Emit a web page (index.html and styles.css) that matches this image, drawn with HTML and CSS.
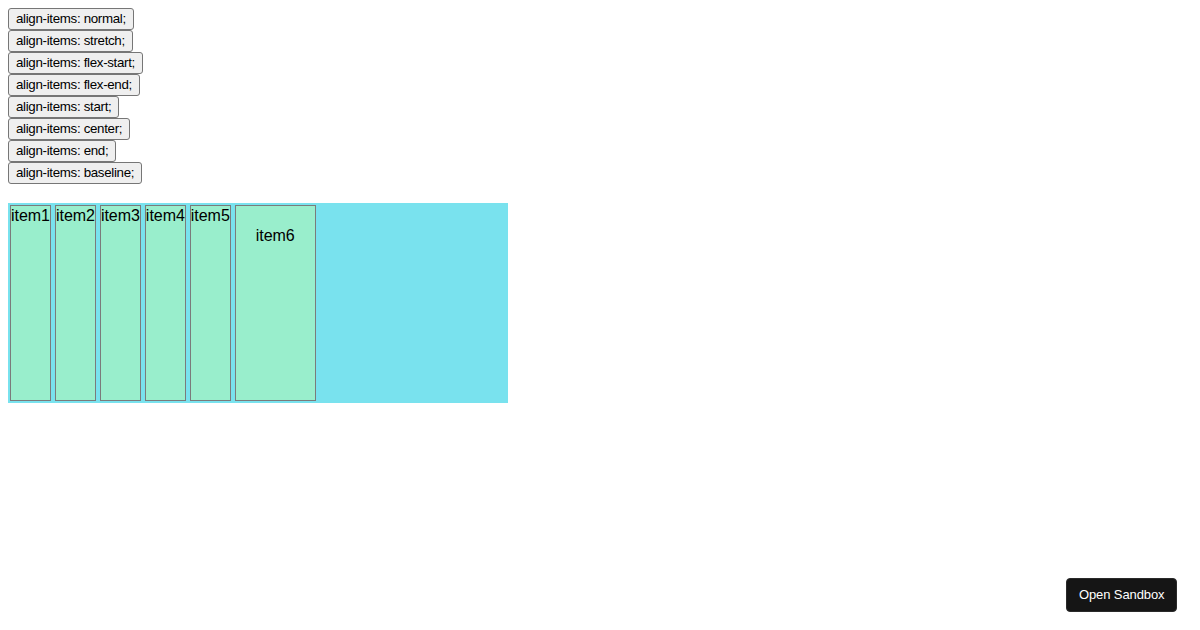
FILE: index.html
```html
<!DOCTYPE html>
<html>
<head>
<meta charset="utf-8">
<link rel="stylesheet" href="styles.css">
</head>
<body>
<div class="controls">
  <button class="opt">align-items: normal;</button>
  <button class="opt">align-items: stretch;</button>
  <button class="opt">align-items: flex-start;</button>
  <button class="opt">align-items: flex-end;</button>
  <button class="opt">align-items: start;</button>
  <button class="opt">align-items: center;</button>
  <button class="opt">align-items: end;</button>
  <button class="opt">align-items: baseline;</button>
</div>
<div class="box">
  <div class="item">item1</div>
  <div class="item">item2</div>
  <div class="item">item3</div>
  <div class="item">item4</div>
  <div class="item">item5</div>
  <div class="item item-pad">item6</div>
</div>
<button class="sandbox">Open Sandbox</button>
</body>
</html>
```
FILE: styles.css
```css
body {
  margin: 8px;
  font-family: "Liberation Sans", Arial, sans-serif;
  font-size: 16px;
  color: #000;
  background: #fff;
}
.controls {
  display: flex;
  flex-direction: column;
  align-items: flex-start;
}
.opt {
  display: block;
  box-sizing: border-box;
  height: 22px;
  margin: 0;
  padding: 1px 7px;
  font-family: "Liberation Sans", Arial, sans-serif;
  font-size: 13.333px;
  letter-spacing: -0.32px;
  line-height: 18px;
  color: #000;
  background: #efefef;
  border: 1px solid #767676;
  border-radius: 3px;
}
.box {
  display: flex;
  width: 500px;
  height: 200px;
  margin-top: 19px;
  background: #79e2ee;
}
.item {
  margin: 2px;
  border: 1px solid #7b7b7b;
  background: #99eecc;
  line-height: 20px;
  letter-spacing: -0.035px;
}
.item-pad {
  padding: 20px;
}
.sandbox {
  position: fixed;
  right: 23px;
  bottom: 18px;
  height: 34px;
  padding: 0 11.5px 1px;
  font-family: "Liberation Sans", Arial, sans-serif;
  font-size: 13px;
  letter-spacing: -0.1px;
  color: #fff;
  background: #151515;
  border: 1px solid #2a2a2a;
  border-radius: 4px;
}
```
